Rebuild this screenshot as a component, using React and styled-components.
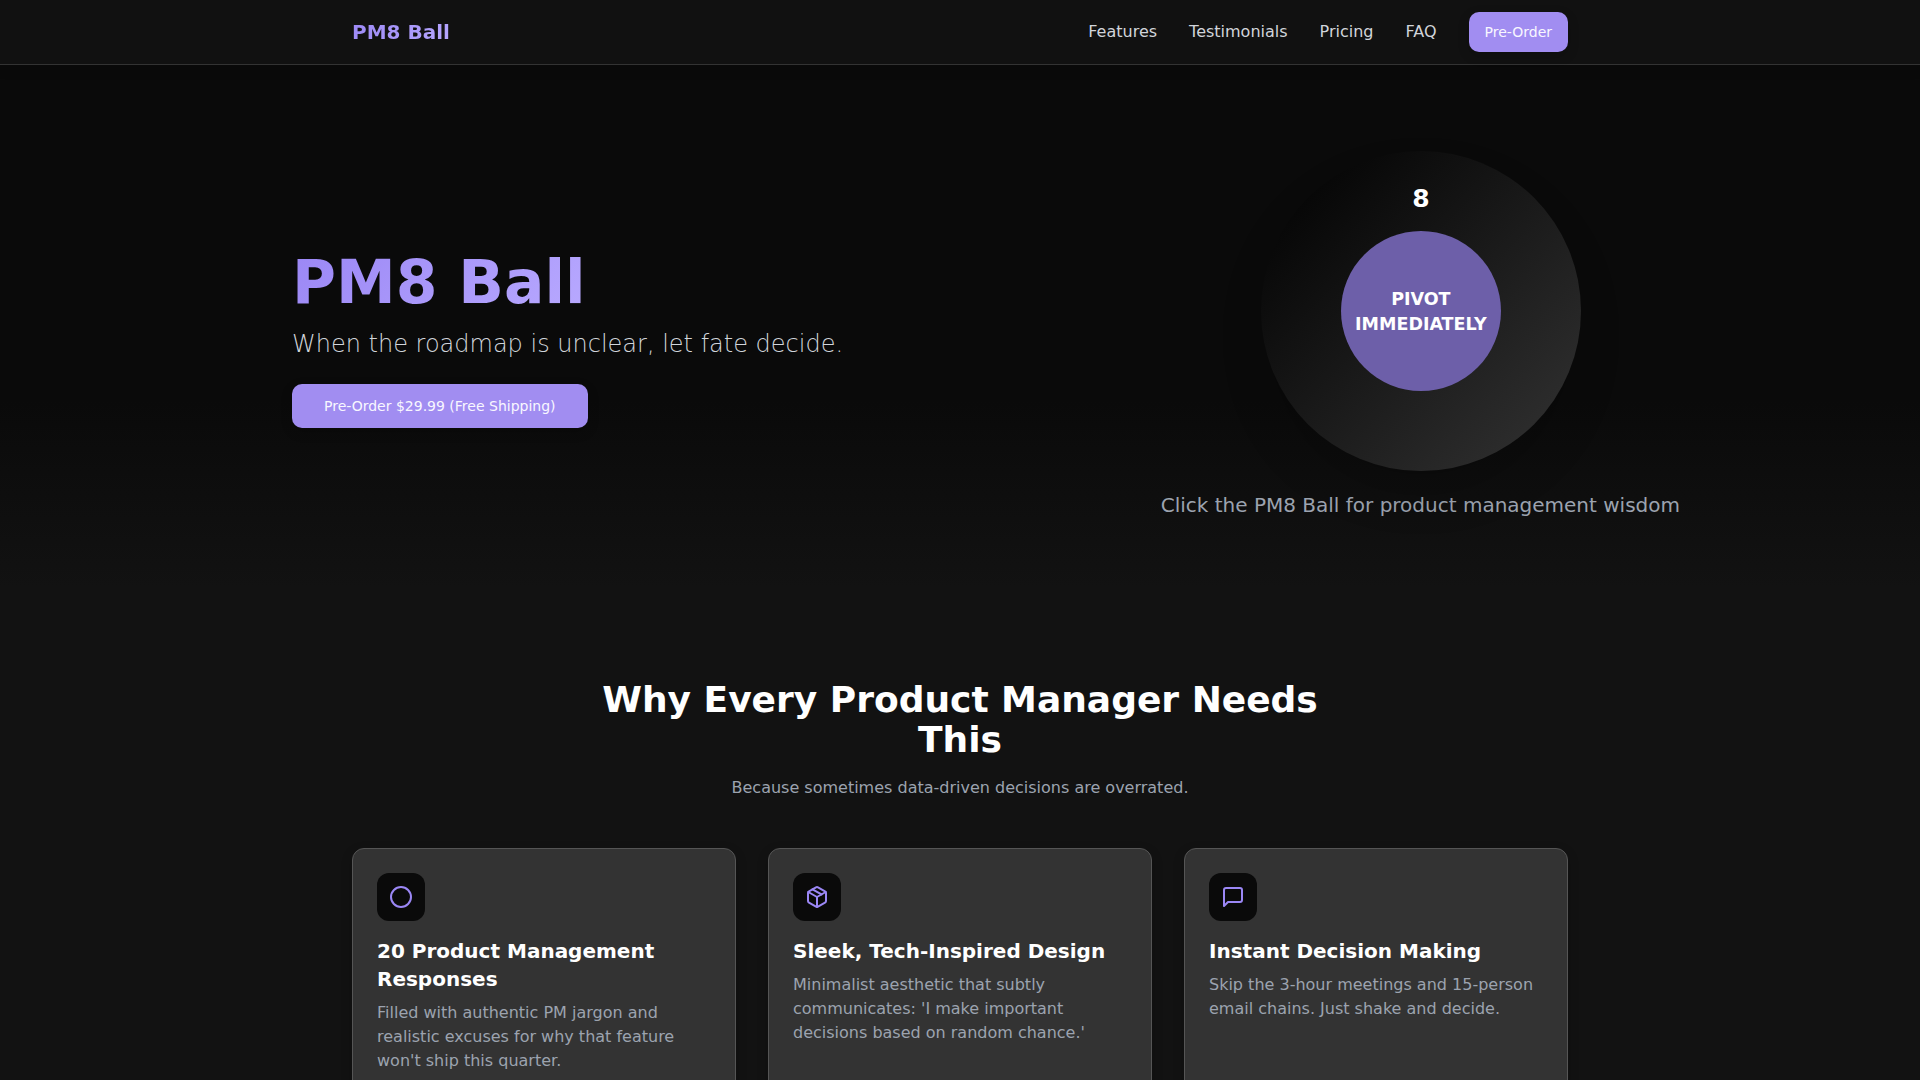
import React from "react";
import styled, { createGlobalStyle } from "styled-components";

const GlobalStyle = createGlobalStyle`
  *, *::before, *::after { box-sizing: border-box; }
  html, body { margin: 0; background: #121212; }
  body {
    height: 1080px;
    overflow: hidden;
    font-family: "DejaVu Sans", sans-serif;
    font-size: 16px;
    line-height: 24px;
    color: #fff;
  }
  h1, h2, h3, p { margin: 0; }
`;

const Header = styled.header`
  position: relative;
  height: 65px;
  background: #111111;
  border-bottom: 1px solid #333333;
  box-shadow: 0 4px 12px rgba(0, 0, 0, 0.1);
`;

const Container = styled.div`
  width: 1216px;
  margin: 0 auto;
`;

const HeaderRow = styled(Container)`
  height: 64px;
  display: flex;
  align-items: center;
  justify-content: space-between;
`;

const Brand = styled.span`
  font-size: 20px;
  line-height: 28px;
  font-weight: 700;
  color: transparent;
  background: linear-gradient(135deg, #9b87f5, #b8a9ff);
  background-clip: text;
  -webkit-background-clip: text;
`;

const Nav = styled.nav`
  display: flex;
  align-items: center;
  gap: 32px;
`;

const NavLink = styled.a`
  color: #d1d5db;
`;

const Button = styled.button`
  height: ${(p) => (p.$large ? 44 : 40)}px;
  padding: 0 ${(p) => (p.$large ? 32 : 16)}px;
  border: 0;
  border-radius: 10px;
  background: #a18df1;
  color: #f8f7ff;
  font: 400 14px/20px "DejaVu Sans", sans-serif;
  box-shadow: 0 4px 12px rgba(0, 0, 0, 0.2);
`;

const Hero = styled.section`
  height: 551px;
  padding: 0 240px 2px 292px;
  display: flex;
  align-items: center;
  justify-content: space-between;
  background: linear-gradient(180deg, #0a0a0a 0%, #0a0a0a 61%, #121212 95%);
`;

const Pitch = styled.div`
  display: flex;
  flex-direction: column;
  align-items: flex-start;
`;

const HeroTitle = styled.h1`
  font-size: 60px;
  line-height: 60px;
  font-weight: 700;
  color: transparent;
  background: linear-gradient(135deg, #9b87f5, #b8a9ff);
  background-clip: text;
  -webkit-background-clip: text;
`;

const Tagline = styled.p`
  margin: 16px 0 24px;
  font-size: 24px;
  line-height: 32px;
  font-weight: 200;
  color: #d1d5db;
`;

const BallColumn = styled.div`
  display: flex;
  flex-direction: column;
  align-items: center;
  gap: 20px;
  padding-bottom: 10px;
`;

const Ball = styled.div`
  position: relative;
  width: 320px;
  height: 320px;
  margin-left: 1px;
  border-radius: 50%;
  display: flex;
  align-items: center;
  justify-content: center;
  background: linear-gradient(135deg, #000 0%, #333 100%);
  box-shadow: 0 25px 50px -12px rgba(0, 0, 0, 0.25);
`;

const Eight = styled.span`
  position: absolute;
  top: 32px;
  left: 0;
  right: 0;
  text-align: center;
  font-size: 25px;
  line-height: 32px;
  font-weight: 700;
`;

const Answer = styled.div`
  width: 160px;
  height: 160px;
  padding-top: 2px;
  border-radius: 50%;
  display: flex;
  align-items: center;
  justify-content: center;
  text-align: center;
  background: #6d5fa9;
  font-size: 17.5px;
  line-height: 25px;
  font-weight: 700;
`;

const Hint = styled.p`
  font-size: 20px;
  line-height: 28px;
  color: #9ca3af;
`;

const Features = styled.section`
  padding: 64px 0;
  background: #121212;
`;

const Intro = styled.div`
  width: 768px;
  margin: 0 auto 48px;
  text-align: center;
`;

const SectionTitle = styled.h2`
  font-size: 36px;
  line-height: 40px;
  font-weight: 700;
  margin-bottom: 16px;
`;

const Muted = styled.p`
  color: #9ca3af;
`;

const Cards = styled(Container)`
  display: grid;
  grid-template-columns: repeat(3, 1fr);
  gap: 32px;
`;

const Card = styled.article`
  min-height: 270px;
  padding: 24px;
  border: 1px solid #555555;
  border-radius: 12px;
  background: #333333;
  box-shadow: 0 4px 12px rgba(0, 0, 0, 0.2);
`;

const IconTile = styled.div`
  width: 48px;
  height: 48px;
  margin-bottom: 16px;
  border-radius: 12px;
  background: #0a0a0a;
  display: flex;
  align-items: center;
  justify-content: center;
`;

const CardTitle = styled.h3`
  margin-bottom: 8px;
  font-size: 20px;
  line-height: 28px;
  font-weight: 700;
`;

const Icon = ({ children }) => (
  <svg
    width="24"
    height="24"
    viewBox="0 0 24 24"
    fill="none"
    stroke="#9b87f5"
    strokeWidth="2"
    strokeLinecap="round"
    strokeLinejoin="round"
  >
    {children}
  </svg>
);

const features = [
  {
    title: "20 Product Management Responses",
    text: "Filled with authentic PM jargon and realistic excuses for why that feature won't ship this quarter.",
    icon: <circle cx="12" cy="12" r="10" />,
  },
  {
    title: "Sleek, Tech-Inspired Design",
    text: "Minimalist aesthetic that subtly communicates: 'I make important decisions based on random chance.'",
    icon: (
      <>
        <path d="m7.5 4.27 9 5.15" />
        <path d="M21 8a2 2 0 0 0-1-1.73l-7-4a2 2 0 0 0-2 0l-7 4A2 2 0 0 0 3 8v8a2 2 0 0 0 1 1.73l7 4a2 2 0 0 0 2 0l7-4A2 2 0 0 0 21 16Z" />
        <path d="m3.3 7 8.7 5 8.7-5" />
        <path d="M12 22V12" />
      </>
    ),
  },
  {
    title: "Instant Decision Making",
    text: "Skip the 3-hour meetings and 15-person email chains. Just shake and decide.",
    icon: <path d="M21 15a2 2 0 0 1-2 2H7l-4 4V5a2 2 0 0 1 2-2h14a2 2 0 0 1 2 2z" />,
  },
];

export default function App() {
  return (
    <>
      <GlobalStyle />
      <Header>
        <HeaderRow>
          <Brand>PM8 Ball</Brand>
          <Nav>
            <NavLink>Features</NavLink>
            <NavLink>Testimonials</NavLink>
            <NavLink>Pricing</NavLink>
            <NavLink>FAQ</NavLink>
            <Button>Pre-Order</Button>
          </Nav>
        </HeaderRow>
      </Header>
      <Hero>
        <Pitch>
          <HeroTitle>PM8 Ball</HeroTitle>
          <Tagline>When the roadmap is unclear, let fate decide.</Tagline>
          <Button $large>Pre-Order $29.99 (Free Shipping)</Button>
        </Pitch>
        <BallColumn>
          <Ball>
            <Eight>8</Eight>
            <Answer>
              PIVOT
              <br />
              IMMEDIATELY
            </Answer>
          </Ball>
          <Hint>Click the PM8 Ball for product management wisdom</Hint>
        </BallColumn>
      </Hero>
      <Features>
        <Intro>
          <SectionTitle>Why Every Product Manager Needs This</SectionTitle>
          <Muted>Because sometimes data-driven decisions are overrated.</Muted>
        </Intro>
        <Cards>
          {features.map((f) => (
            <Card key={f.title}>
              <IconTile>
                <Icon>{f.icon}</Icon>
              </IconTile>
              <CardTitle>{f.title}</CardTitle>
              <Muted>{f.text}</Muted>
            </Card>
          ))}
        </Cards>
      </Features>
    </>
  );
}
